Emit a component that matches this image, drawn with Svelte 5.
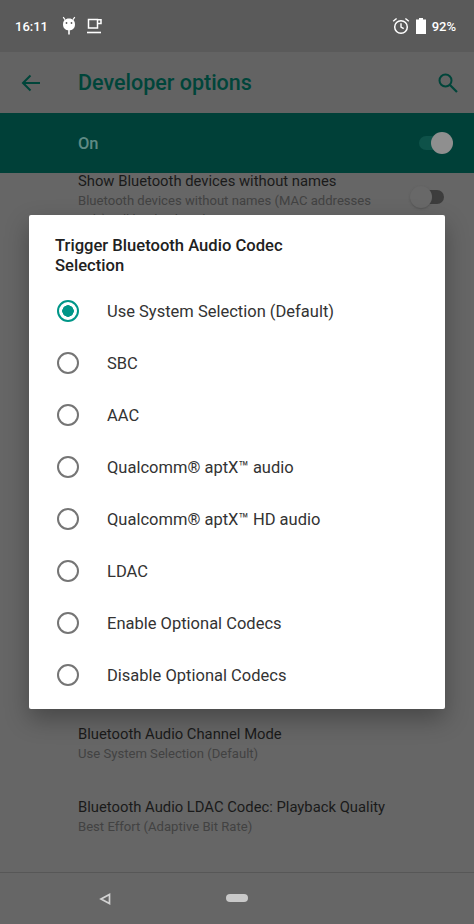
<script>
	const options = [
		'Use System Selection (Default)',
		'SBC',
		'AAC',
		'Qualcomm® aptX™ audio',
		'Qualcomm® aptX™ HD audio',
		'LDAC',
		'Enable Optional Codecs',
		'Disable Optional Codecs'
	];
	let selected = $state(0);
</script>

<div class="screen">
	<div class="status">
		<span class="time">16:11</span>
		<svg class="droid" width="18" height="20" viewBox="0 0 18 20" aria-hidden="true">
			<path d="M3.2 1.2 5 3.6M14.800 1.200 13 3.600" stroke="#fff" stroke-width="1.200" fill="none" />
			<path d="M3 8.500C3 4.800 5.200 2.500 9 2.500s6 2.300 6 6c0 3.600-2.500 5.800-6 5.800S3 12.100 3 8.500z" fill="#fff" />
			<circle cx="6.500" cy="7" r="0.900" fill="#5a5a5a" />
			<circle cx="11.500" cy="7" r="0.900" fill="#5a5a5a" />
			<path d="M9 14v4.500" stroke="#fff" stroke-width="1.600" />
		</svg>
		<svg class="cup" width="17" height="16" viewBox="0 0 17 16" aria-hidden="true">
			<path d="M2.500 1.500h9v8.500h-9zM11.500 1.700h3.500v3.800h-3.500" fill="none" stroke="#fff" stroke-width="1.500" />
			<path d="M1 14.500h14" stroke="#fff" stroke-width="1.600" />
		</svg>
		<span class="spacer"></span>
		<svg class="alarm" width="18" height="18" viewBox="0 0 18 18" aria-hidden="true">
			<circle cx="9" cy="10" r="6.300" fill="none" stroke="#fff" stroke-width="1.500" />
			<path d="M9 6.200V10l2.700 1.700M1.200 4.300 4.600 1.500M16.800 4.300l-3.400-2.800" fill="none" stroke="#fff" stroke-width="1.400" />
		</svg>
		<svg class="battery" width="10" height="16" viewBox="0 0 10 16" aria-hidden="true">
			<path d="M3 0h4v1.500h3V16H0V1.500h3z" fill="#fff" />
		</svg>
		<span class="percent">92%</span>
	</div>

	<header class="appbar">
		<svg width="24" height="24" viewBox="0 0 24 24" aria-hidden="true">
			<path d="M21 12H4.500M11.500 4.500 4 12l7.500 7.500" fill="none" stroke="#00453a" stroke-width="2" />
		</svg>
		<h1>Developer options</h1>
		<svg class="search" width="24" height="24" viewBox="0 0 24 24" aria-hidden="true">
			<circle cx="9.500" cy="9.500" r="6" fill="none" stroke="#00453a" stroke-width="2" />
			<path d="m14 14 7 7" stroke="#00453a" stroke-width="2.200" />
		</svg>
	</header>

	<div class="master">
		<span>On</span>
		<div class="switch on"><i></i></div>
	</div>

	<div class="list">
		<div class="item first">
			<div class="texts">
				<div class="title">Show Bluetooth devices without names</div>
				<div class="sub">Bluetooth devices without names (MAC addresses only) will be displayed</div>
			</div>
			<div class="switch off"><i></i></div>
		</div>
		<div class="item push">
			<div class="texts">
				<div class="title">Bluetooth Audio Channel Mode</div>
				<div class="sub">Use System Selection (Default)</div>
			</div>
		</div>
		<div class="item">
			<div class="texts">
				<div class="title">Bluetooth Audio LDAC Codec: Playback Quality</div>
				<div class="sub">Best Effort (Adaptive Bit Rate)</div>
			</div>
		</div>
	</div>

	<nav class="navbar">
		<svg class="back" width="12" height="12" viewBox="0 0 12 12" aria-hidden="true">
			<path d="M10.500 1.500v9L2 6z" fill="none" stroke="#d2d2d2" stroke-width="1.700" />
		</svg>
		<span class="home"></span>
	</nav>

	<div class="dialog" role="dialog">
		<h2>Trigger Bluetooth Audio Codec Selection</h2>
		{#each options as option, i}
			<button class="option" onclick={() => (selected = i)}>
				<span class="radio" class:checked={selected === i}></span>
				<span>{option}</span>
			</button>
		{/each}
	</div>
</div>

<style>
	:global(body) {
		margin: 0;
		background: #666;
	}

	.screen {
		position: relative;
		width: 474px;
		height: 924px;
		overflow: hidden;
		display: flex;
		flex-direction: column;
		background: #666;
		font-family: Roboto, "Noto Sans", sans-serif;
	}

	.status {
		height: 52px;
		box-sizing: border-box;
		display: flex;
		align-items: center;
		padding: 0 18px 0 15px;
		background: #5a5a5a;
		color: #fff;
		font-size: 13px;
		font-weight: 500;
	}

	.droid { margin-left: 12px; }
	.cup { margin-left: 8px; }
	.spacer { flex: 1; }
	.battery { margin-left: 6px; }
	.percent { margin-left: 6px; }

	.appbar {
		height: 61px;
		display: flex;
		align-items: center;
		padding-left: 19px;
		padding-right: 14px;
		background: #636363;
	}

	h1 {
		flex: 1;
		margin: 0 0 0 35px;
		font-size: 21.500px;
		font-weight: 500;
		color: #00453a;
	}

	.master {
		height: 60px;
		display: flex;
		align-items: center;
		justify-content: space-between;
		padding: 0 23px 0 78px;
		box-sizing: border-box;
		background: #004038;
		color: #5f8a84;
		font-size: 16.500px;
		font-weight: 500;
	}

	.switch {
		position: relative;
		width: 32px;
		height: 14px;
		border-radius: 7px;
	}

	.switch i {
		position: absolute;
		top: -4px;
		width: 22px;
		height: 22px;
		border-radius: 50%;
	}

	.switch.on { background: #0e5249; }
	.switch.on i { right: -2px; background: #8f8f8f; }
	.switch.off { background: #3d3d3d; margin-top: 19px; }
	.switch.off i { left: -2px; background: #686868; box-shadow: 0 1px 2px #4448; }

	.list {
		flex: 1;
		display: flex;
		flex-direction: column;
		margin-top: -2px;
		padding-bottom: 2px;
	}

	.item {
		display: flex;
		align-items: flex-start;
		justify-content: space-between;
		padding: 0 30px 0 78px;
		height: 73px;
		box-sizing: border-box;
	}

	.push { margin-top: auto; }

	.first .texts { max-width: 300px; }

	.title {
		font-size: 14.800px;
		line-height: 20px;
		color: #1a1a1a;
	}

	.sub {
		font-size: 13.100px;
		line-height: 19px;
		color: #424242;
	}

	.navbar {
		height: 51px;
		display: flex;
		align-items: center;
		border-top: 1px solid #575757;
		background: #666;
	}

	.back { margin-left: 99px; }

	.home {
		width: 22px;
		height: 8px;
		margin-left: 115px;
		margin-top: -2px;
		border-radius: 4px;
		background: #c9c9c9;
	}

	.dialog {
		position: absolute;
		left: 29px;
		top: 215px;
		width: 416px;
		height: 494px;
		box-sizing: border-box;
		background: #fff;
		border-radius: 2px;
		box-shadow: 0 10px 24px rgba(0, 0, 0, 0.3);
		padding-top: 21px;
	}

	h2 {
		margin: 0 100px 9px 26px;
		font-size: 16.600px;
		line-height: 20px;
		font-weight: 500;
		color: #212121;
	}

	.option {
		display: flex;
		align-items: center;
		gap: 28px;
		width: 100%;
		height: 52px;
		padding: 0 0 0 28px;
		border: 0;
		background: none;
		font: inherit;
		font-size: 16.500px;
		color: #333;
		text-align: left;
	}

	.radio {
		width: 22px;
		height: 22px;
		box-sizing: border-box;
		border: 2px solid #757575;
		border-radius: 50%;
		flex-shrink: 0;
	}

	.radio.checked {
		border-color: #009688;
		background: radial-gradient(circle, #009688 0 5.500px, transparent 6px);
	}
</style>
